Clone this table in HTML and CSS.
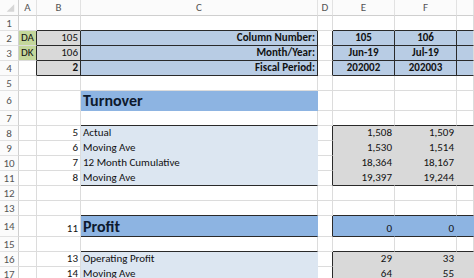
FILE: index.html
```html
<!DOCTYPE html>
<html>
<head>
<meta charset="utf-8">
<link rel="stylesheet" href="styles.css">
</head>
<body>
<div class="sheet">
  <!-- header row -->
  <div class="c corner"><svg width="19" height="16" viewBox="0 0 19 16"><polygon points="15,5 15,13 7,13" fill="#d6d6d6"/></svg></div>
  <div class="c ch">A</div>
  <div class="c ch">B</div>
  <div class="c ch">C</div>
  <div class="c ch">D</div>
  <div class="c ch">E</div>
  <div class="c ch">F</div>
  <div class="c ch"></div>

  <!-- row 1 -->
  <div class="c rh">1</div>
  <div class="c"></div>
  <div class="c db"></div>
  <div class="c db"></div>
  <div class="c"></div>
  <div class="c db"></div>
  <div class="c db"></div>
  <div class="c db"></div>

  <!-- row 2 -->
  <div class="c rh">2</div>
  <div class="c grn dr">DA</div>
  <div class="c gry dr db r">105</div>
  <div class="c blu dr db r b">Column Number:</div>
  <div class="c dr"></div>
  <div class="c blu dr db ctr b">105</div>
  <div class="c blu dr db ctr b">106</div>
  <div class="c blu db"></div>

  <!-- row 3 -->
  <div class="c rh">3</div>
  <div class="c grn dr">DK</div>
  <div class="c gry dr db r">106</div>
  <div class="c blu dr db r b">Month/Year:</div>
  <div class="c dr"></div>
  <div class="c blu dr db ctr b">Jun-19</div>
  <div class="c blu dr db ctr b">Jul-19</div>
  <div class="c blu db"></div>

  <!-- row 4 -->
  <div class="c rh">4</div>
  <div class="c dr"></div>
  <div class="c gry dr db r b">2</div>
  <div class="c blu dr db r b">Fiscal Period:</div>
  <div class="c dr"></div>
  <div class="c blu dr db ctr b">202002</div>
  <div class="c blu dr db ctr b">202003</div>
  <div class="c blu db"></div>

  <!-- row 5 -->
  <div class="c rh">5</div>
  <div class="c"></div>
  <div class="c"></div>
  <div class="c"></div>
  <div class="c"></div>
  <div class="c"></div>
  <div class="c"></div>
  <div class="c"></div>

  <!-- row 6 -->
  <div class="c rh">6</div>
  <div class="c"></div>
  <div class="c"></div>
  <div class="c mb big">Turnover</div>
  <div class="c"></div>
  <div class="c"></div>
  <div class="c"></div>
  <div class="c"></div>

  <!-- row 7 -->
  <div class="c rh">7</div>
  <div class="c"></div>
  <div class="c"></div>
  <div class="c db"></div>
  <div class="c"></div>
  <div class="c db"></div>
  <div class="c db"></div>
  <div class="c db"></div>

  <!-- row 8 -->
  <div class="c rh">8</div>
  <div class="c"></div>
  <div class="c r">5</div>
  <div class="c lb">Actual</div>
  <div class="c dr"></div>
  <div class="c gry r">1,508</div>
  <div class="c gry r">1,509</div>
  <div class="c gry"></div>

  <!-- row 9 -->
  <div class="c rh">9</div>
  <div class="c"></div>
  <div class="c r">6</div>
  <div class="c lb">Moving Ave</div>
  <div class="c dr"></div>
  <div class="c gry r">1,530</div>
  <div class="c gry r">1,514</div>
  <div class="c gry"></div>

  <!-- row 10 -->
  <div class="c rh">10</div>
  <div class="c"></div>
  <div class="c r">7</div>
  <div class="c lb">12 Month Cumulative</div>
  <div class="c dr"></div>
  <div class="c gry r">18,364</div>
  <div class="c gry r">18,167</div>
  <div class="c gry"></div>

  <!-- row 11 -->
  <div class="c rh">11</div>
  <div class="c"></div>
  <div class="c r">8</div>
  <div class="c lb db">Moving Ave</div>
  <div class="c dr"></div>
  <div class="c gry r db">19,397</div>
  <div class="c gry r db">19,244</div>
  <div class="c gry db"></div>

  <!-- row 12 -->
  <div class="c rh">12</div>
  <div class="c"></div>
  <div class="c"></div>
  <div class="c"></div>
  <div class="c"></div>
  <div class="c"></div>
  <div class="c"></div>
  <div class="c"></div>

  <!-- row 13 -->
  <div class="c rh">13</div>
  <div class="c"></div>
  <div class="c"></div>
  <div class="c db"></div>
  <div class="c"></div>
  <div class="c db"></div>
  <div class="c db"></div>
  <div class="c db"></div>

  <!-- row 14 -->
  <div class="c rh">14</div>
  <div class="c"></div>
  <div class="c r">11</div>
  <div class="c mb db big">Profit</div>
  <div class="c dr"></div>
  <div class="c mb db r">0</div>
  <div class="c mb db r">0</div>
  <div class="c mb db"></div>

  <!-- row 15 -->
  <div class="c rh">15</div>
  <div class="c"></div>
  <div class="c"></div>
  <div class="c db"></div>
  <div class="c"></div>
  <div class="c db"></div>
  <div class="c db"></div>
  <div class="c db"></div>

  <!-- row 16 -->
  <div class="c rh">16</div>
  <div class="c"></div>
  <div class="c r">13</div>
  <div class="c lb">Operating Profit</div>
  <div class="c dr"></div>
  <div class="c gry r">29</div>
  <div class="c gry r">33</div>
  <div class="c gry"></div>

  <!-- row 17 -->
  <div class="c rh">17</div>
  <div class="c"></div>
  <div class="c r">14</div>
  <div class="c lb">Moving Ave</div>
  <div class="c dr"></div>
  <div class="c gry r">64</div>
  <div class="c gry r">55</div>
  <div class="c gry"></div>
</div>
</body>
</html>
```

FILE: styles.css
```css
* { box-sizing: border-box; }
html, body { margin: 0; padding: 0; background: #fff; }
body {
  font-family: Carlito, Lato, "Liberation Sans", sans-serif;
  font-size: 11px;
  color: #111;
  width: 474px;
  height: 278px;
  overflow: hidden;
}
.sheet {
  display: grid;
  grid-template-columns: 19px 18px 44px 237px 15px 62px 62px 17px;
  grid-template-rows: 16px repeat(5, 15px) 20px repeat(7, 15px) 21px repeat(3, 15px);
  width: 474px;
}
.c {
  display: flex;
  align-items: flex-end;
  padding: 0 2px 1px 2px;
  line-height: 13px;
  white-space: nowrap;
  overflow: hidden;
  border-right: 1px solid #dcdcdc;
  border-bottom: 1px solid #dcdcdc;
}
.corner { padding: 0; background: #fbfbfb; border-color: #d0d0d0; }
.corner svg { display: block; }
.ch {
  justify-content: center;
  align-items: center;
  padding: 0;
  color: #555;
  background: #fbfbfb;
  border-right-color: #e2e2e2;
  border-bottom-color: #cfcfcf;
}
.rh {
  justify-content: center;
  align-items: center;
  padding: 0;
  color: #555;
  background: #fbfbfb;
  border-right-color: #cfcfcf;
  border-bottom-color: #e2e2e2;
}
.r { justify-content: flex-end; }
.ctr { justify-content: center; }
.b { font-weight: bold; }
.big { font-size: 16px; font-weight: bold; line-height: 19px; padding-bottom: 0; color: #0d1a2e; }
.grn { background: #c4d79b; }
.gry { background: #d9d9d9; border-color: #d9d9d9; }
.blu { background: #b8cce4; }
.mb { background: #8db4e2; border-color: #8db4e2; }
.lb { background: #dce6f1; border-color: #dce6f1; }
.dr { border-right-color: #2a2a2a; }
.db { border-bottom-color: #2a2a2a; }
```
